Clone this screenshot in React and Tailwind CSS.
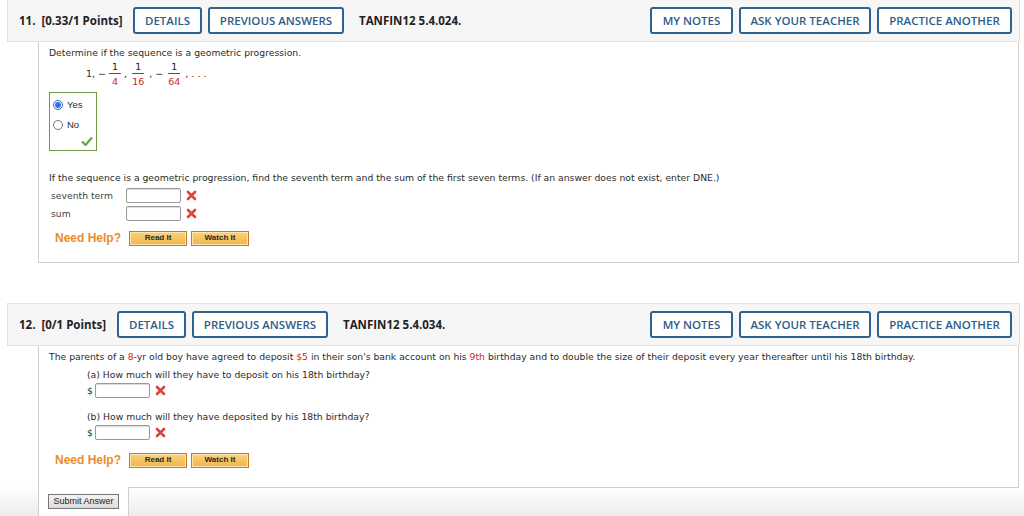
import React from 'react';

const verdana = { fontFamily: '"DejaVu Sans", Verdana, sans-serif' };

function HeadButton({ children, className = '' }) {
    return (
        <div className={`h-[27px] flex items-center justify-center whitespace-nowrap border-2 border-[#30628f] rounded-[3px] bg-white text-[#2d5d8b] text-[11.5px] font-semibold ${className}`}>
            {children}
        </div>
    );
}

function QuestionHeader({ num, points, code, detailsLeft }) {
    return (
        <div className="ml-[7px] w-[1013px] h-[42px] bg-[#f6f6f6] border border-t-0 border-[#e2e2e2] flex items-center font-['Open_Sans',sans-serif]">
            <div className="flex items-center whitespace-nowrap text-[11.5px] font-bold text-[#222] pl-[11px]" style={{ width: detailsLeft }}>
                <span>{num}</span>
                <span className="ml-[6px]">{points}</span>
            </div>
            <HeadButton className="w-[69px]">DETAILS</HeadButton>
            <HeadButton className="w-[136px] ml-[6px]">PREVIOUS ANSWERS</HeadButton>
            <span className="ml-[15px] text-[11.5px] font-bold text-[#222] whitespace-nowrap">{code}</span>
            <div className="ml-auto mr-[7px] flex gap-[6px]">
                <HeadButton className="w-[83px]">MY NOTES</HeadButton>
                <HeadButton className="w-[132px]">ASK YOUR TEACHER</HeadButton>
                <HeadButton className="w-[135px]">PRACTICE ANOTHER</HeadButton>
            </div>
        </div>
    );
}

function RedX() {
    return (
        <svg width="11" height="11" viewBox="0 0 11 11" className="ml-[5px]">
            <path d="M2 2 L9 9 M9 2 L2 9" stroke="#e0413c" strokeWidth="2.6" strokeLinecap="round" />
        </svg>
    );
}

function Input({ w = 'w-[55px]' }) {
    return <div className={`${w} h-[15px] border border-[#999] rounded-[2px] bg-white shadow-[inset_0_1px_1px_rgba(0,0,0,0.15)]`} />;
}

function Frac({ num, den }) {
    return (
        <span className="inline-flex flex-col items-center align-middle mx-[3px] leading-none">
            <span className="text-[#222] pb-[2px] px-[3px] border-b border-[#555]">{num}</span>
            <span className="text-[#d3241e] pt-[3px] px-[2px]">{den}</span>
        </span>
    );
}

function NeedHelp() {
    return (
        <div className="flex items-center ml-[6px]">
            <span className="text-[#ea8c2e] text-[12px] font-bold font-['Liberation_Sans',Arial,sans-serif]">Need Help?</span>
            <div className="ml-[8px] w-[58px] h-[15px] border border-[#c47a26] bg-gradient-to-b from-[#fbd27a] to-[#f2b447] flex items-center justify-center text-[8px] font-bold text-[#2a2a2a] font-['Liberation_Sans',Arial,sans-serif] shadow-[inset_0_0_0_1px_#fde7b0]">Read It</div>
            <div className="ml-[4px] w-[58px] h-[15px] border border-[#c47a26] bg-gradient-to-b from-[#fbd27a] to-[#f2b447] flex items-center justify-center text-[8px] font-bold text-[#2a2a2a] font-['Liberation_Sans',Arial,sans-serif] shadow-[inset_0_0_0_1px_#fde7b0]">Watch It</div>
        </div>
    );
}

export default function App() {
    return (
        <div className="w-[1024px] h-[516px] overflow-hidden bg-white text-[#2b2b2b]">
            {/* Question 11 */}
            <QuestionHeader num="11." points="[0.33/1 Points]" code="TANFIN12 5.4.024." detailsLeft={125} />
            <div className="ml-[38px] w-[981px] h-[221px] border border-t-0 border-[#cfcfcf] pl-[10px] pt-[4px] text-[9.25px]" style={verdana}>
                <p className="leading-[14px]">Determine if the sequence is a geometric progression.</p>
                <div className="ml-[37px] mt-[1px] flex items-center text-[9.5px] h-[26px]">
                    <span>1,&nbsp;&minus;</span>
                    <Frac num="1" den="4" />
                    <span>,</span>
                    <Frac num="1" den="16" />
                    <span>,&nbsp;&minus;</span>
                    <Frac num="1" den="64" />
                    <span>, . . .</span>
                </div>
                <div className="mt-[5px] w-[48px] h-[59px] border-[1.5px] border-[#6f9a45] relative pl-[3px] pt-[5px]">
                    <div className="flex items-center h-[14px]">
                        <span className="w-[10px] h-[10px] rounded-full border border-[#2a6bd6] bg-white flex items-center justify-center">
                            <span className="w-[6px] h-[6px] rounded-full bg-[#2f74e6]" />
                        </span>
                        <span className="ml-[4px] font-['Liberation_Sans',Arial,sans-serif] text-[9.5px]">Yes</span>
                    </div>
                    <div className="flex items-center h-[14px] mt-[6px]">
                        <span className="w-[10px] h-[10px] rounded-full border border-[#777] bg-white" />
                        <span className="ml-[4px] font-['Liberation_Sans',Arial,sans-serif] text-[9.5px]">No</span>
                    </div>
                    <svg width="12" height="10" viewBox="0 0 12 10" className="absolute right-[3px] bottom-[4px]">
                        <path d="M1 5.5 L4.5 9 L11 1.5" stroke="#6aa84f" strokeWidth="2.4" fill="none" strokeLinejoin="round" />
                    </svg>
                </div>
                <p className="mt-[20px] leading-[14px]">If the sequence is a geometric progression, find the seventh term and the sum of the first seven terms. (If an answer does not exist, enter DNE.)</p>
                <div className="mt-[3px] flex items-center h-[15px]">
                    <span className="w-[77px] pl-[2px] text-[#444]">seventh term</span>
                    <Input />
                    <RedX />
                </div>
                <div className="mt-[3px] flex items-center h-[15px]">
                    <span className="w-[77px] pl-[2px] text-[#444]">sum</span>
                    <Input />
                    <RedX />
                </div>
                <div className="mt-[8px]">
                    <NeedHelp />
                </div>
            </div>

            <div className="h-[40px]" />

            {/* Question 12 */}
            <div className="border-t border-[#e2e2e2] ml-[7px] w-[1013px]" />
            <QuestionHeader num="12." points="[0/1 Points]" code="TANFIN12 5.4.034." detailsLeft={109} />
            <div className="ml-[38px] w-[981px] h-[141px] border-x border-[#cfcfcf] pl-[10px] pt-[4px] text-[9.25px]" style={verdana}>
                <p className="leading-[14px]">
                    The parents of a <span className="text-[#d3241e]">8</span>-yr old boy have agreed to deposit <span className="text-[#d3241e]">$5</span> in their son's bank account on his <span className="text-[#d3241e]">9th</span> birthday and to double the size of their deposit every year thereafter until his 18th birthday.
                </p>
                <div className="ml-[38px]">
                    <p className="mt-[4px] leading-[14px]">(a) How much will they have to deposit on his 18th birthday?</p>
                    <div className="flex items-center h-[15px] mt-[1px]">
                        <span className="w-[8px]">$</span>
                        <Input />
                        <RedX />
                    </div>
                    <p className="mt-[12px] leading-[14px]">(b) How much will they have deposited by his 18th birthday?</p>
                    <div className="flex items-center h-[15px] mt-[1px]">
                        <span className="w-[8px]">$</span>
                        <Input />
                        <RedX />
                    </div>
                </div>
                <div className="mt-[11px]">
                    <NeedHelp />
                </div>
            </div>
            <div className="flex h-[31px] bg-gradient-to-b from-white to-[#ebebeb]">
                <div className="ml-[38px] w-[91px] border-x border-[#cfcfcf] bg-white pl-[9px] pt-[7px]">
                    <div className="w-[71px] h-[15px] border border-[#777] bg-gradient-to-b from-[#f4f4f4] to-[#dcdcdc] flex items-center justify-center text-[9px] text-[#222] font-['Liberation_Sans',Arial,sans-serif]">Submit Answer</div>
                </div>
                <div className="w-[890px] border-t border-[#cfcfcf]" />
            </div>
        </div>
    );
}
